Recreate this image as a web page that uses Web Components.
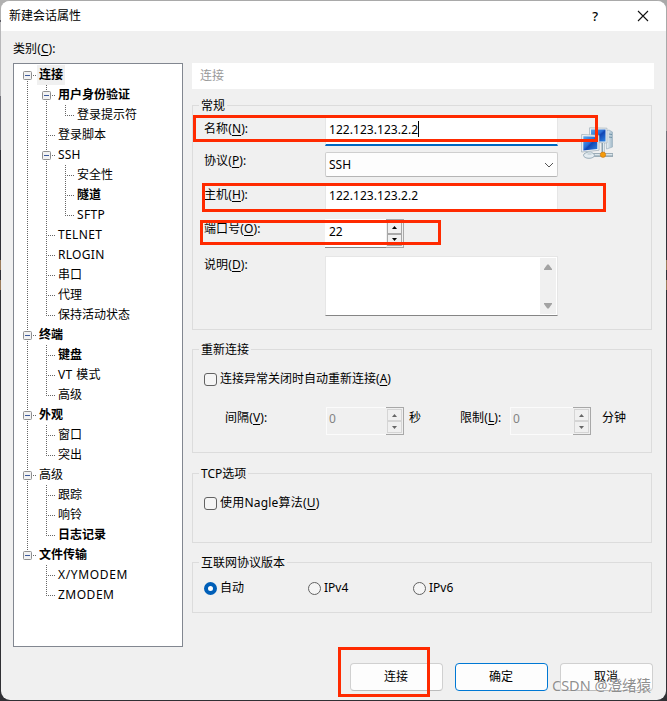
<!DOCTYPE html>
<html lang="zh-CN">
<head>
<meta charset="utf-8">
<title>新建会话属性</title>
<style>
html,body{margin:0;height:100%;overflow:hidden}
body{font:12px/20px "Noto Sans","Noto Sans CJK SC",sans-serif;color:#000;
background:linear-gradient(90deg,transparent 50%,#a9a9a9 50%) 0 0/100% 131px no-repeat,linear-gradient(#b0b0b0 0 20px,#5a5a62 20px 22px,#b7b7b9 22px 96px,#707078 96px 150px,#303036 150px 260px,#997b5b 260px 270px,#303036 270px 280px,#997b5b 280px 290px,#303034 290px)}
</style>
</head>
<body>
<session-dialog></session-dialog>
<script>
const define = (name, html, init) => customElements.define(name, class extends HTMLElement {
  connectedCallback() {
    if (this.shadowRoot) return;
    this.attachShadow({ mode: 'open' }).innerHTML = typeof html === 'function' ? html(this) : html;
    if (init) init(this);
  }
});

/* Caption with an underlined access key */
define('key-label', e => `<style>:host{display:block;white-space:nowrap;line-height:20px;letter-spacing:var(--ls,.1px)}u{text-underline-offset:2px;text-decoration-thickness:1px}</style><slot></slot>${e.hasAttribute('key') ? `(<u>${e.getAttribute('key')}</u>)` : ''}${e.hasAttribute('colon') ? ':' : ''}`);

define('title-bar', `<style>
:host{display:flex;height:30px;background:#fff;align-items:center;padding-left:8px}
span{flex:1}svg{display:block}.q{margin-right:39px;font-size:13px;flex:none;font-weight:500}.x{margin-right:17px}
</style><span><slot></slot></span><span class="q">?</span><svg class="x" width="12" height="12"><path d="M1 1l10 10M11 1L1 11" stroke="#111" stroke-width="1.1"/></svg>`);

/* One tree line: dotted guides, optional expander, caption */
define('tree-row', e => {
  const level = +e.getAttribute('level'), mask = e.getAttribute('rails') || '';
  const open = e.hasAttribute('open'), last = e.hasAttribute('last'), first = e.hasAttribute('first');
  const gx = 13.5 + 19 * level, w = 23 + 19 * level;
  let d = '';
  for (let i = 0; i < level; i++) if (mask[i] === '1') d += `M${13.5 + 19 * i} 0V20`;
  d += `M${gx} ${first ? 10 : 0}V${last ? 10 : 20}M${gx - .5} 10.5H${gx + 8.5}`;
  const box = open ? `<rect x="${gx - 4}" y="6.500" width="8" height="8" rx="1" fill="#f2f2f2" stroke="#8f8f8f"/><path d="M${gx - 2.5} 10.5h5" stroke="#3c5a9c"/>` : '';
  return `<style>:host{display:flex;height:20px;line-height:20px;white-space:nowrap}svg{display:block;flex:none}span{padding:0 2px;font-weight:${e.hasAttribute('bold') ? 700 : 400};background:${e.hasAttribute('selected') ? '#f0f0f0' : 'none'};letter-spacing:${e.getAttribute('ls') || 0}px}</style>
  <svg width="${w}" height="20"><path d="${d}" fill="none" stroke="#666" stroke-dasharray="1 1"/>${box}</svg><span><slot></slot></span>`;
});

define('category-tree', `<style>:host{display:block;box-sizing:border-box;width:170px;height:584px;border:1px solid #828790;background:#fff;padding-top:1px}</style>`, e => {
  const rows = [
    [0,'连接','obsf'],[1,'用户身份验证','ob'],[2,'登录提示符','l','11'],[1,'登录脚本',''],[1,'SSH','o'],
    [2,'安全性','','11'],[2,'隧道','b','11'],[2,'SFTP','l','11'],[1,'TELNET',''],[1,'RLOGIN',''],[1,'串口',''],[1,'代理',''],[1,'保持活动状态','l'],
    [0,'终端','ob'],[1,'键盘','b'],[1,'VT 模式',''],[1,'高级','l'],[0,'外观','ob'],[1,'窗口',''],[1,'突出','l'],
    [0,'高级','o'],[1,'跟踪',''],[1,'响铃',''],[1,'日志记录','bl'],[0,'文件传输','obl'],[1,'X/YMODEM','','0'],[1,'ZMODEM','l','0']];
  const names = { o:'open', b:'bold', s:'selected', f:'first', l:'last' };
  const ls = { TELNET:.35, RLOGIN:.3, 'X/YMODEM':.65, ZMODEM:.5, SFTP:.3, SSH:.2, 'VT 模式':.4 };
  for (const [level, text, flags, rails] of rows) {
    const r = document.createElement('tree-row');
    r.setAttribute('level', level); r.setAttribute('rails', rails || '1');
    for (const f of flags) r.setAttribute(names[f], '');
    if (ls[text]) r.setAttribute('ls', ls[text]);
    r.textContent = text; e.shadowRoot.append(r);
  }
});

define('group-box', e => `<style>
:host{display:block;box-sizing:border-box;width:460px;border:1px solid #dcdcdc}
.t{width:max-content;margin:-10px 0 0 6px;padding:0 2px;background:#f0f0f0;line-height:20px;height:20px}
</style><div class="t">${e.getAttribute('caption')}</div><slot></slot>`);

define('form-row', e => `<style>
:host{display:flex;align-items:flex-start}
key-label{width:121px;margin-top:${e.getAttribute('shift') || 0}px}
</style><key-label key="${e.getAttribute('key')}" colon>${e.getAttribute('label')}</key-label><slot></slot>`);

define('text-field', e => `<style>
:host{display:flex;box-sizing:border-box;width:233px;height:29px;background:#fff;border:1px solid #e6e6e6;border-bottom:0;padding-left:3px;line-height:24px;letter-spacing:.05px}
:host([focused]){border-bottom:2px solid #0067c0;line-height:23px}
i{width:1px;height:16px;background:#000;margin-top:3px}
</style><slot></slot>${e.hasAttribute('focused') ? '<i></i>' : ''}`);

define('select-field', `<style>
:host{display:flex;box-sizing:border-box;width:233px;height:25px;border:1px solid #cfcfcf;border-bottom-color:#b5b5b5;border-radius:2px;background:#fdfdfd;align-items:center;justify-content:space-between;padding:0 3px}
svg{display:block}</style><span><slot></slot></span><svg width="10" height="8"><path d="M1 2l4 4 4-4" fill="none" stroke="#555"/></svg>`);

define('spin-field', `<style>
:host{display:flex;box-sizing:border-box;width:79px;height:29px;--c:#000;--b:#a8a8a8}
.v{flex:1;background:#fff;border-bottom:1px solid #858585;padding-left:4px;line-height:25px}
.s{box-sizing:border-box;width:18px;border:1px solid #a8a8a8;border-left:0;padding:1px;display:grid;gap:0;grid-template-rows:1fr 1fr}
.s b{display:grid;place-items:center;border:1px solid var(--b)}
svg{display:block}
:host([disabled]){height:28px;--c:#666;--b:#d5d5d5}
:host([disabled]) .v{background:#f0f0f0;border:1px solid #fbfbfb;border-right:0;color:#838383;padding-left:2px;line-height:22px}
</style><div class="v"><slot></slot></div><div class="s"><b><svg width="5" height="3"><path d="M0 3L2.5 0 5 3z" style="fill:var(--c)"/></svg></b><b><svg width="5" height="3"><path d="M0 0L2.5 3 5 0z" style="fill:var(--c)"/></svg></b></div>`);

define('memo-field', `<style>
:host{display:flex;box-sizing:border-box;width:233px;height:60px;background:#fff;border:1px solid #e6e6e6;border-bottom-color:#858585;justify-content:flex-end;padding:1px}
div{width:16px;background:#f0f0f0;display:flex;flex-direction:column;justify-content:space-between;align-items:center;padding:6px 0 5px;box-sizing:border-box}svg{display:block}
</style><div><svg width="8" height="6"><path d="M0 6V5L3.3.5h1.4L8 5v1z" fill="#a3a3a3"/></svg><svg width="8" height="6"><path d="M0 0v1l3.3 4.5h1.4L8 1V0z" fill="#a3a3a3"/></svg></div>`);

define('check-option', e => `<style>
:host{display:flex;align-items:center;height:20px;gap:3px}
i{box-sizing:border-box;width:13px;height:13px;border:1px solid #626262;border-radius:3px;background:#f5f5f5}
:host([radio]) i{border-radius:50%}
:host([checked]) i{border:4px solid #005fb8;background:#fff}
</style><i></i><slot></slot>`);

define('push-button', `<style>
:host{display:grid;place-items:center;box-sizing:border-box;width:93px;height:28px;border:1px solid #d0d0d0;border-bottom-color:#bcbcbc;border-radius:4px;background:#fdfdfd}
:host([default]){border-color:#0078d4}
span{margin-right:1px}
</style><span><slot></slot></span>`);

/* Two networked computers */
define('network-icon', `<style>:host{display:block;width:32px;height:32px}svg{display:block}</style>
<svg width="32" height="32" viewBox="0 0 32 32"><defs><linearGradient id="a" x2="1" y2="1"><stop stop-color="#5aa9ee"/><stop offset=".45" stop-color="#2a6fd6"/><stop offset=".55" stop-color="#1246b4"/><stop offset="1" stop-color="#2f86e2"/></linearGradient><linearGradient id="b" x2="1"><stop stop-color="#f4f8fa"/><stop offset="1" stop-color="#9fb8c8"/></linearGradient></defs>
<path d="M25 4l3-1 3.500 2v15l-6 2z" fill="url(#b)" stroke="#9db1be" stroke-width=".7"/><path d="M28 7l3 .6M28 10l3 .5" stroke="#7194a8"/>
<path d="M8.500 .8l17.500 .4v14.800l-17.500-1z" fill="#edf2f4" stroke="#a9b6bf" stroke-width=".8"/><path d="M10 2.500h14.500v12H10z" fill="url(#a)"/>
<path d="M22 16v10" stroke="#8aa0ae" stroke-width="3"/><path d="M22.500 16v10" stroke="#dfeaf0"/>
<path d="M12 28h20" stroke="#8096a3" stroke-width="3.400"/><path d="M12 27.700h19.500" stroke="#dce7ed" stroke-width="1.500"/>
<ellipse cx="8" cy="28.300" rx="5.500" ry="3" fill="#e4ecf1" stroke="#9aacb8"/><path d="M6.500 23h4v5h-4z" fill="#cbd7de"/>
<path d="M.6 7.500l17.400 .8v15L.6 25z" fill="#f2f5f7" stroke="#a4b3bd" stroke-width=".8"/><path d="M2.300 9.300l14 .5v12.300l-14 1.400z" fill="url(#a)"/>
<circle cx="22" cy="27.700" r="2.700" fill="#f59b0b" stroke="#c77614" stroke-width=".6"/></svg>`);

define('session-dialog', `<style>
:host{display:block;position:relative;height:701px}
.win{box-sizing:border-box;margin:0 1px;height:700px;border-top:1px solid #a9a9a9;border-radius:9px;overflow:hidden;background:#f0f0f0}
.main{display:grid;grid-template-columns:170px 462px;column-gap:9px;padding:8px 0 0 12px}
.cat{height:24px}
.right{padding-top:24px}
.head{height:26px;line-height:26px;background:#fff;color:#999;padding-left:8px;margin-bottom:16px}
.general{height:225px;margin-bottom:19px}.again{height:104px;margin-bottom:20px}.tcp{height:70px;margin-bottom:19px}.ip{height:51px}
.cols{display:flex;padding:1px 0 0 11px}
.form{display:grid;grid-template-rows:29px 25px 29px 29px 60px;row-gap:6px}
.form>:nth-child(4){margin-top:1px}.form>:nth-child(5){margin-top:3px}
network-icon{margin:10px 0 0 23px}
.opt{padding:9px 0 0 11px}
.lim{display:flex;padding:18px 0 0 32px}
.lim key-label{margin-top:1px}
.radios{display:grid;grid-template-columns:104px 105px 1fr;padding:5px 0 0 11px}
.btns{display:flex;gap:12px;justify-content:flex-end;padding:16px 13px 0 0}
.mark{position:absolute;box-sizing:border-box;border:3px solid #ff2a00}
.wm{position:absolute;left:552px;top:675px;font-size:14.5px;line-height:20px;white-space:nowrap;color:rgba(105,105,105,.75);text-shadow:0 0 1px #fff}
</style>
<div class="win"><title-bar>新建会话属性</title-bar>
<div class="main">
 <div><div class="cat"><key-label key="C" colon>类别</key-label></div><category-tree></category-tree></div>
 <div class="right"><div class="head">连接</div>
  <group-box class="general" caption="常规"><div class="cols"><div class="form">
   <form-row label="名称" key="N" shift="2"><text-field focused>122.123.123.2.2</text-field></form-row>
   <form-row label="协议" key="P" shift="-1"><select-field>SSH</select-field></form-row>
   <form-row label="主机" key="H" shift="2"><text-field>122.123.123.2.2</text-field></form-row>
   <form-row label="端口号" key="O"><spin-field>22</spin-field></form-row>
   <form-row label="说明" key="D" shift="-1"><memo-field></memo-field></form-row>
  </div><network-icon></network-icon></div></group-box>
  <group-box class="again" caption="重新连接">
   <div class="opt"><check-option><key-label key="A" style="--ls:0">连接异常关闭时自动重新连接</key-label></check-option></div>
   <div class="lim"><key-label key="V" colon style="width:101px">间隔</key-label><spin-field disabled style="width:78px">0</spin-field><key-label style="margin-left:5px;width:51px">秒</key-label><key-label key="L" colon style="width:50px">限制</key-label><spin-field disabled style="width:81px">0</spin-field><key-label style="margin-left:11px">分钟</key-label></div>
  </group-box>
  <group-box class="tcp" caption="TCP选项"><div class="opt"><check-option><key-label key="U" style="--ls:.2px">使用Nagle算法</key-label></check-option></div></group-box>
  <group-box class="ip" caption="互联网协议版本"><div class="radios"><check-option radio checked>自动</check-option><check-option radio>IPv4</check-option><check-option radio>IPv6</check-option></div></group-box>
 </div></div>
<div class="btns"><push-button>连接</push-button><push-button default>确定</push-button><push-button>取消</push-button></div>
</div>
<div class="mark" style="left:193px;top:115px;width:405px;height:27px"></div>
<div class="mark" style="left:202px;top:183px;width:404px;height:29px"></div>
<div class="mark" style="left:200px;top:220px;width:241px;height:25px"></div>
<div class="mark" style="left:338px;top:647px;width:92px;height:50px"></div>
<div class="wm">CSDN @澄绪猿</div>`);
</script>
</body>
</html>
